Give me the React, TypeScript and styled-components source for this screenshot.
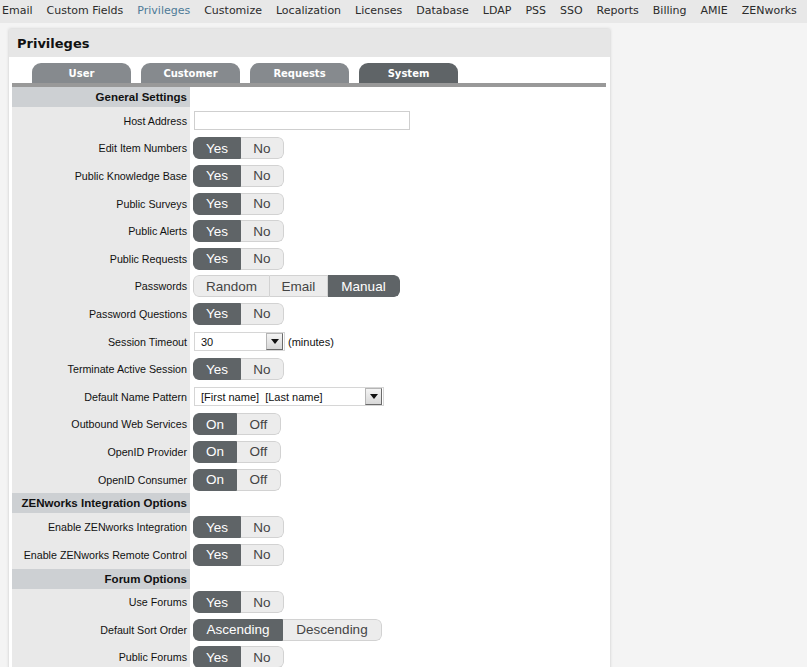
import * as React from 'react'
import styled, { createGlobalStyle } from 'styled-components'

const GlobalStyle = createGlobalStyle`
  body {
    margin: 0;
    background: #f4f4f4;
    font-family: "Liberation Sans", Arial, sans-serif;
    color: #222;
  }
`

const NavBar = styled.div`
  display: flex;
  align-items: center;
  gap: 14px;
  height: 23px;
  padding: 0 0 0 2px;
  background: #e8e8e8;
  font-family: "DejaVu Sans", Verdana, sans-serif;
  font-size: 11px;
  white-space: nowrap;
`

const NavItem = styled.span<{ $active?: boolean }>`
  color: ${p => (p.$active ? '#4d7a97' : '#2b2b2b')};
  padding-bottom: 2px;
`

const Page = styled.div`
  padding: 6px 0 0 9px;
`

const Panel = styled.div`
  width: 601px;
  background: #fff;
  box-shadow: 0 0 3px rgba(0, 0, 0, 0.18);
`

const PanelHeader = styled.div`
  display: flex;
  align-items: center;
  height: 28px;
  padding-left: 8px;
  background: #e6e6e6;
  font-family: "DejaVu Sans", Verdana, sans-serif;
  font-weight: bold;
  font-size: 13px;
  color: #111;
`

const PanelBody = styled.div`
  padding: 6px 4px 0 3px;
`

const TabRow = styled.div`
  display: flex;
  gap: 10px;
  padding-left: 20px;
  height: 20px;
`

const Tab = styled.div<{ $active?: boolean }>`
  width: 99px;
  display: flex;
  align-items: center;
  justify-content: center;
  border-radius: 9px 9px 0 0;
  background: ${p => (p.$active ? '#5f6467' : '#868a8e')};
  color: #fff;
  font-family: "DejaVu Sans", Verdana, sans-serif;
  font-weight: bold;
  font-size: 10px;
`

const TabRule = styled.div`
  height: 4px;
  background: #999;
`

const Grid = styled.div`
  display: grid;
  grid-template-columns: 178px 1fr;
`

const SectionLabel = styled.div`
  height: 20px;
  display: flex;
  align-items: center;
  justify-content: flex-end;
  padding-right: 3px;
  background: #cdd0d3;
  font-weight: bold;
  font-size: 11.5px;
  color: #111;
`

const SectionFill = styled.div`
  height: 20px;
`

const Label = styled.div`
  height: 27.6px;
  display: flex;
  align-items: center;
  justify-content: flex-end;
  padding-right: 3px;
  background: #e9e9e9;
  font-size: 10.7px;
  color: #111;
  white-space: nowrap;
`

const Value = styled.div`
  height: 27.6px;
  display: flex;
  align-items: center;
  padding-left: 3px;
  gap: 3px;
  font-size: 11px;
`

const Segmented = styled.div`
  display: inline-flex;
  height: 22px;
  border-radius: 6px;
  overflow: hidden;
`

const Segment = styled.div<{ $active?: boolean; $w: number; $first?: boolean; $last?: boolean }>`
  width: ${p => p.$w}px;
  box-sizing: border-box;
  display: flex;
  align-items: center;
  justify-content: center;
  font-size: 13.5px;
  background: ${p => (p.$active ? '#5f6467' : '#ececec')};
  color: ${p => (p.$active ? '#fff' : '#444')};
  border: 1px solid ${p => (p.$active ? '#5f6467' : '#d2d2d2')};
  border-left-width: ${p => (p.$first ? 1 : 0)}px;
  border-radius: ${p => (p.$first ? '6px 0 0 6px' : p.$last ? '0 6px 6px 0' : '0')};
`

const TextInput = styled.div`
  width: 214px;
  height: 17px;
  margin-left: 1px;
  border: 1px solid #cfcfcf;
  background: #fff;
`

const SelectBox = styled.div<{ $w: number }>`
  width: ${p => p.$w}px;
  height: 19px;
  margin-left: 1px;
  display: flex;
  align-items: center;
  justify-content: space-between;
  border: 1px solid #d6d6d6;
  background: #fff;
  font-size: 11px;
  color: #111;
  padding-left: 6px;
  box-sizing: border-box;
  white-space: pre;
`

const Arrow = styled.div`
  width: 15px;
  height: 15px;
  margin-right: 1px;
  display: flex;
  align-items: center;
  justify-content: center;
  background: linear-gradient(#f4f4f4, #d8d8d8);
  border: 1px solid #b5b5b5;
  border-right-color: #6a6a6a;
  border-bottom-color: #6a6a6a;
`

const Unit = styled.span`
  font-size: 11px;
  color: #111;
`

type Opt = { text: string; w: number; active?: boolean }

const Toggle = ({ options }: { options: Opt[] }) => (
  <Segmented>
    {options.map((o, i) => (
      <Segment key={o.text} $w={o.w} $active={o.active} $first={i === 0} $last={i === options.length - 1}>
        {o.text}
      </Segment>
    ))}
  </Segmented>
)

const yesNo: Opt[] = [
  { text: 'Yes', w: 48, active: true },
  { text: 'No', w: 43 },
]
const onOff: Opt[] = [
  { text: 'On', w: 44, active: true },
  { text: 'Off', w: 44 },
]

const Select = ({ value, width }: { value: string; width: number }) => (
  <SelectBox $w={width}>
    <span>{value}</span>
    <Arrow>
      <svg width="8" height="5" viewBox="0 0 8 5">
        <path d="M0 0h8L4 5z" fill="#111" />
      </svg>
    </Arrow>
  </SelectBox>
)

type Row =
  | { section: string }
  | { label: string; control: React.ReactNode }

const rows: Row[] = [
  { section: 'General Settings' },
  { label: 'Host Address', control: <TextInput /> },
  { label: 'Edit Item Numbers', control: <Toggle options={yesNo} /> },
  { label: 'Public Knowledge Base', control: <Toggle options={yesNo} /> },
  { label: 'Public Surveys', control: <Toggle options={yesNo} /> },
  { label: 'Public Alerts', control: <Toggle options={yesNo} /> },
  { label: 'Public Requests', control: <Toggle options={yesNo} /> },
  {
    label: 'Passwords',
    control: (
      <Toggle
        options={[
          { text: 'Random', w: 77 },
          { text: 'Email', w: 58 },
          { text: 'Manual', w: 72, active: true },
        ]}
      />
    ),
  },
  { label: 'Password Questions', control: <Toggle options={yesNo} /> },
  {
    label: 'Session Timeout',
    control: (
      <>
        <Select value="30" width={91} />
        <Unit>(minutes)</Unit>
      </>
    ),
  },
  { label: 'Terminate Active Session', control: <Toggle options={yesNo} /> },
  { label: 'Default Name Pattern', control: <Select value="[First name]  [Last name]" width={190} /> },
  { label: 'Outbound Web Services', control: <Toggle options={onOff} /> },
  { label: 'OpenID Provider', control: <Toggle options={onOff} /> },
  { label: 'OpenID Consumer', control: <Toggle options={onOff} /> },
  { section: 'ZENworks Integration Options' },
  { label: 'Enable ZENworks Integration', control: <Toggle options={yesNo} /> },
  { label: 'Enable ZENworks Remote Control', control: <Toggle options={yesNo} /> },
  { section: 'Forum Options' },
  { label: 'Use Forums', control: <Toggle options={yesNo} /> },
  {
    label: 'Default Sort Order',
    control: (
      <Toggle
        options={[
          { text: 'Ascending', w: 90, active: true },
          { text: 'Descending', w: 99 },
        ]}
      />
    ),
  },
  { label: 'Public Forums', control: <Toggle options={yesNo} /> },
]

const navItems = [
  'Email', 'Custom Fields', 'Privileges', 'Customize', 'Localization', 'Licenses', 'Database',
  'LDAP', 'PSS', 'SSO', 'Reports', 'Billing', 'AMIE', 'ZENworks',
]

const tabs = ['User', 'Customer', 'Requests', 'System']

export default function App() {
  return (
    <>
      <GlobalStyle />
      <NavBar>
        {navItems.map(n => (
          <NavItem key={n} $active={n === 'Privileges'}>{n}</NavItem>
        ))}
      </NavBar>
      <Page>
        <Panel>
          <PanelHeader>Privileges</PanelHeader>
          <PanelBody>
            <TabRow>
              {tabs.map(t => (
                <Tab key={t} $active={t === 'System'}>{t}</Tab>
              ))}
            </TabRow>
            <TabRule />
            <Grid>
              {rows.map((r, i) =>
                'section' in r ? (
                  <React.Fragment key={i}>
                    <SectionLabel>{r.section}</SectionLabel>
                    <SectionFill />
                  </React.Fragment>
                ) : (
                  <React.Fragment key={i}>
                    <Label>{r.label}</Label>
                    <Value>{r.control}</Value>
                  </React.Fragment>
                )
              )}
            </Grid>
          </PanelBody>
        </Panel>
      </Page>
    </>
  )
}
